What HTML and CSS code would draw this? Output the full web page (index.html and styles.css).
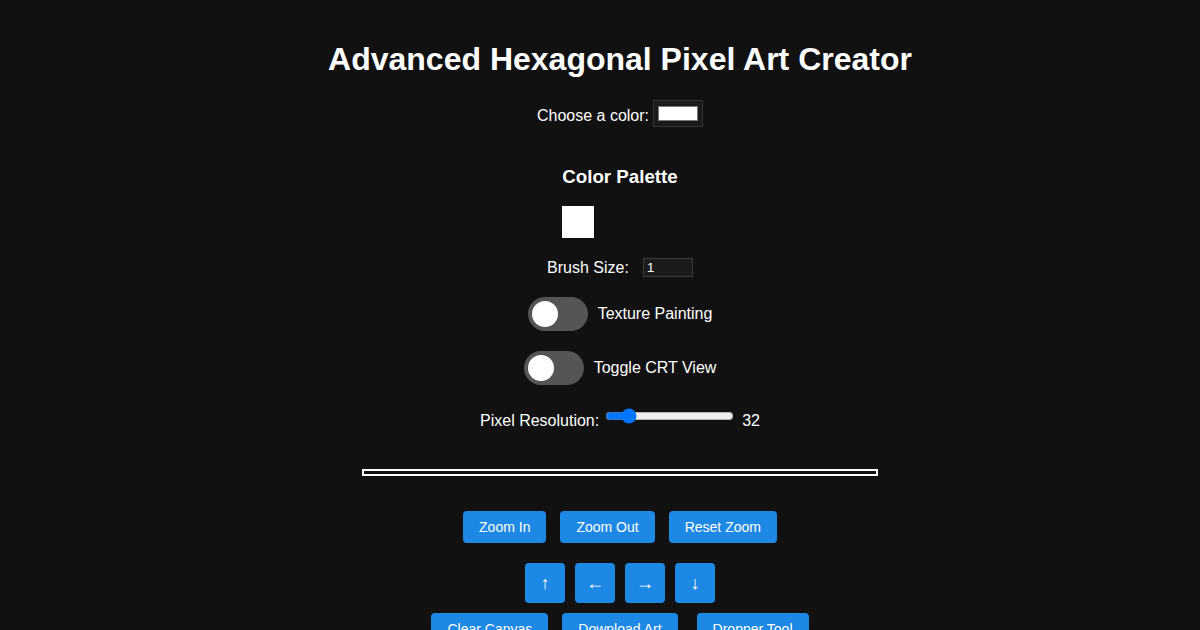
FILE: index.html
```html
<!DOCTYPE html>
<html lang="en">
<head>
  <meta charset="UTF-8">
  <meta name="viewport" content="width=device-width, initial-scale=1">
  <title>Advanced Hexagonal Pixel Art Creator</title>
  <link rel="stylesheet" href="styles.css">
</head>
<body>
  <h1>Advanced Hexagonal Pixel Art Creator</h1>

  <div class="control">
    <label for="colorPicker">Choose a color:</label>
    <span class="color-input"><span class="color-swatch"></span></span>
  </div>

  <!-- Paleta -->
  <div class="palette">
    <h3>Color Palette</h3>
    <div class="palette-colors">
      <div class="palette-color"></div>
    </div>
  </div>

  <div class="control brush">
    <label for="brushSize">Brush Size:</label>
    <input type="number" id="brushSize" value="1" min="1" max="10">
  </div>

  <div class="control toggle-row">
    <label class="switch">
      <input type="checkbox" id="textureToggle">
      <span class="slider"></span>
    </label>
    <span>Texture Painting</span>
  </div>

  <div class="control toggle-row">
    <label class="switch">
      <input type="checkbox" id="crtToggle">
      <span class="slider"></span>
    </label>
    <span>Toggle CRT View</span>
  </div>

  <div class="control resolution">
    <label for="resolution">Pixel Resolution:</label>
    <input type="range" id="resolution" min="16" max="128" value="32">
    <span>32</span>
  </div>

  <div class="canvas-wrap">
    <div class="canvas"></div>
  </div>

  <div class="buttons">
    <button>Zoom In</button>
    <button>Zoom Out</button>
    <button>Reset Zoom</button>
  </div>

  <div class="buttons arrows">
    <button>↑</button>
    <button>←</button>
    <button>→</button>
    <button>↓</button>
  </div>

  <div class="buttons tools">
    <button>Clear Canvas</button>
    <button>Download Art</button>
    <button class="dropper">Dropper Tool</button>
  </div>
</body>
</html>
```

FILE: styles.css
```css
* {
  box-sizing: border-box;
}
body {
  margin: 0;
  padding: 41px 0 0 40px;
  background: #111;
  color: #fff;
  font-family: "Liberation Sans", Arial, sans-serif;
  font-size: 16px;
  text-align: center;
}
h1 {
  font-size: 32px;
  margin: 0 0 26px;
  line-height: 37px;
}
.control {
  display: flex;
  justify-content: center;
  align-items: center;
}
.control label {
  margin-right: 4px;
}
.color-input {
  display: inline-block;
  width: 50px;
  height: 27px;
  padding: 5px 4px;
  background: #1a1a1a;
  border: 1px solid #333;
  margin-top: -3px;
  position: relative;
  top: -1px;
}
.color-swatch {
  display: block;
  width: 100%;
  height: 100%;
  background: #fff;
  border: 1px solid #777;
}
.palette {
  display: inline-block;
  margin-top: 38px;
  text-align: left;
}
.palette h3 {
  font-size: 18.72px;
  margin: 0 0 18px;
  line-height: 22px;
}
.palette-colors {
  display: flex;
  gap: 6px;
}
.palette-color {
  width: 32px;
  height: 32px;
  background: #fff;
}
.brush {
  margin-top: 16px;
  height: 19px;
}
.brush label {
  margin-right: 14px;
}
.brush input {
  width: 50px;
  height: 19px;
  background: #1b1b1b;
  color: #fff;
  border: 1px solid #3a3a3a;
  font-family: "Liberation Sans", Arial, sans-serif;
  font-size: 13px;
  padding: 0 3px;
}
.brush input::-webkit-inner-spin-button {
  -webkit-appearance: none;
}
.toggle-row {
  margin-top: 20px;
}
.switch {
  position: relative;
  display: inline-block;
  width: 60px;
  height: 34px;
  margin-right: 10px !important;
}
.switch input {
  opacity: 0;
  width: 0;
  height: 0;
}
.slider {
  position: absolute;
  inset: 0;
  background: #555;
  border-radius: 34px;
  cursor: pointer;
}
.slider:before {
  content: "";
  position: absolute;
  width: 26px;
  height: 26px;
  left: 4px;
  bottom: 4px;
  background: #fff;
  border-radius: 50%;
}
.resolution {
  margin-top: 25px;
  align-items: baseline;
}
.resolution label {
  margin-right: 2px;
}
.resolution input {
  width: 129px;
  margin: 0 8px 0 4px;
  position: relative;
  top: -2px;
}
.canvas-wrap {
  margin-top: 39px;
}
.canvas {
  display: inline-block;
  width: 516px;
  height: 7px;
  border: 2px solid #fff;
  background: #111;
  vertical-align: top;
}
.buttons {
  display: flex;
  justify-content: center;
  gap: 14px;
  margin-top: 24px;
}
button {
  background: #1e88e5;
  color: #fff;
  border: none;
  border-radius: 4px;
  padding: 0 16px;
  height: 32px;
  font-family: "Liberation Sans", Arial, sans-serif;
  font-size: 14px;
  cursor: pointer;
}
.arrows {
  gap: 10px;
  margin-top: 20px;
}
.arrows button {
  width: 40px;
  height: 40px;
  padding: 0;
  font-size: 18px;
}
.tools {
  margin-top: 10px;
}
.tools .dropper {
  margin-left: 5px;
}
```
